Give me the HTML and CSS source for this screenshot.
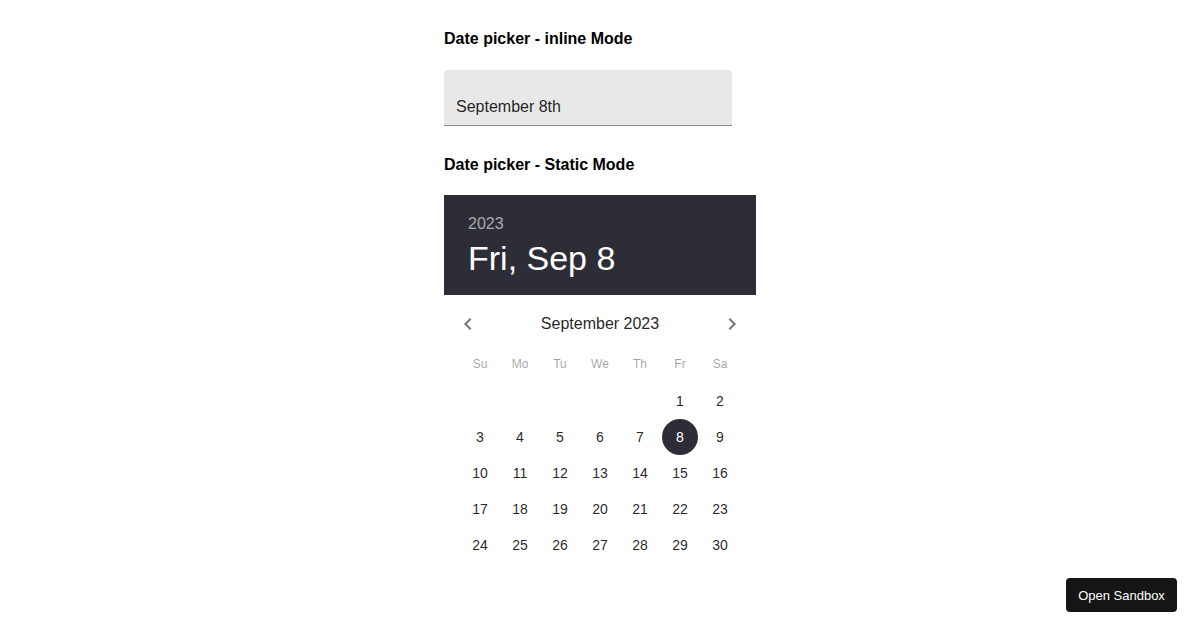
FILE: index.html
```html
<!DOCTYPE html>
<html lang="en">
<head>
  <meta charset="UTF-8">
  <title>Date pickers</title>
  <link rel="stylesheet" href="styles.css">
</head>
<body>
  <div class="page">
    <h2 class="section-title">Date picker - inline Mode</h2>
    <div class="filled-input">September 8th</div>

    <h2 class="section-title">Date picker - Static Mode</h2>
    <div class="static-picker">
      <!-- Toolbar with year and full date -->
      <div class="toolbar">
        <div class="toolbar-year">2023</div>
        <div class="toolbar-date">Fri, Sep 8</div>
      </div>

      <!-- Month switcher -->
      <div class="month-header">
        <span class="arrow">
          <svg viewBox="0 0 24 24" width="24" height="24"><path d="M15.41 7.41 14 6l-6 6 6 6 1.41-1.41L10.83 12z"/></svg>
        </span>
        <span class="month-label">September 2023</span>
        <span class="arrow">
          <svg viewBox="0 0 24 24" width="24" height="24"><path d="M10 6 8.59 7.41 13.17 12l-4.58 4.59L10 18l6-6z"/></svg>
        </span>
      </div>

      <div class="weekdays">
        <span>Su</span><span>Mo</span><span>Tu</span><span>We</span><span>Th</span><span>Fr</span><span>Sa</span>
      </div>

      <div class="days" id="days"></div>
    </div>
  </div>

  <button class="sandbox-btn">Open Sandbox</button>

  <script>
    // September 2023 starts on a Friday
    var days = document.getElementById('days');
    var offset = 5;
    for (var i = 0; i < offset; i++) {
      var empty = document.createElement('span');
      empty.className = 'day empty';
      days.appendChild(empty);
    }
    for (var d = 1; d <= 30; d++) {
      var cell = document.createElement('span');
      cell.className = 'day' + (d === 8 ? ' selected' : '');
      cell.innerText = d;
      days.appendChild(cell);
    }
  </script>
</body>
</html>
```

FILE: styles.css
```css
body {
  margin: 0;
  font-family: "Liberation Sans", Arial, sans-serif;
  color: rgba(0, 0, 0, 0.87);
  background: #fff;
}
.page {
  width: 312px;
  margin: 0 auto;
  padding-top: 29px;
}
.section-title {
  margin: 0;
  font-size: 16px;
  line-height: 19px;
  font-weight: bold;
  color: #000;
}
/* Filled text field */
.filled-input {
  width: 288px;
  height: 56px;
  margin: 22px 0 29px;
  padding: 25px 12px 0;
  box-sizing: border-box;
  background: #e8e8e8;
  border-radius: 4px 4px 0 0;
  border-bottom: 1px solid #8a8a8a;
  font-size: 16px;
  line-height: 23px;
  color: rgba(0, 0, 0, 0.87);
}
.static-picker {
  margin-top: 21px;
  width: 312px;
}
.toolbar {
  background: #2d2d37;
  height: 100px;
  box-sizing: border-box;
  padding: 17px 24px 0;
  color: #fff;
}
.toolbar-year {
  font-size: 16px;
  line-height: 24px;
  color: rgba(255, 255, 255, 0.6);
}
.toolbar-date {
  font-size: 34px;
  line-height: 42px;
  margin-top: 1px;
}
.month-header {
  display: flex;
  align-items: center;
  justify-content: space-between;
  height: 30px;
  margin-top: 14px;
  padding: 0 12px;
}
.arrow {
  display: flex;
  width: 24px;
  height: 24px;
}
.arrow svg {
  fill: rgba(0, 0, 0, 0.54);
}
.month-label {
  font-size: 16px;
  color: rgba(0, 0, 0, 0.87);
}
.weekdays,
.days {
  display: grid;
  grid-template-columns: repeat(7, 40px);
  padding: 0 16px;
}
.weekdays {
  margin-top: 15px;
  height: 20px;
  align-items: center;
  margin-bottom: 9px;
}
.weekdays span {
  text-align: center;
  font-size: 12px;
  color: rgba(0, 0, 0, 0.38);
}
.day {
  width: 36px;
  height: 36px;
  margin: 0 2px;
  display: flex;
  align-items: center;
  justify-content: center;
  font-size: 14px;
  border-radius: 50%;
}
.day.selected {
  background: #2d2d37;
  color: #fff;
}
.sandbox-btn {
  position: fixed;
  right: 23px;
  bottom: 18px;
  width: 111px;
  height: 34px;
  border: none;
  border-radius: 4px;
  background: #151515;
  color: #fff;
  font-family: "Liberation Sans", Arial, sans-serif;
  font-size: 13px;
}
```
